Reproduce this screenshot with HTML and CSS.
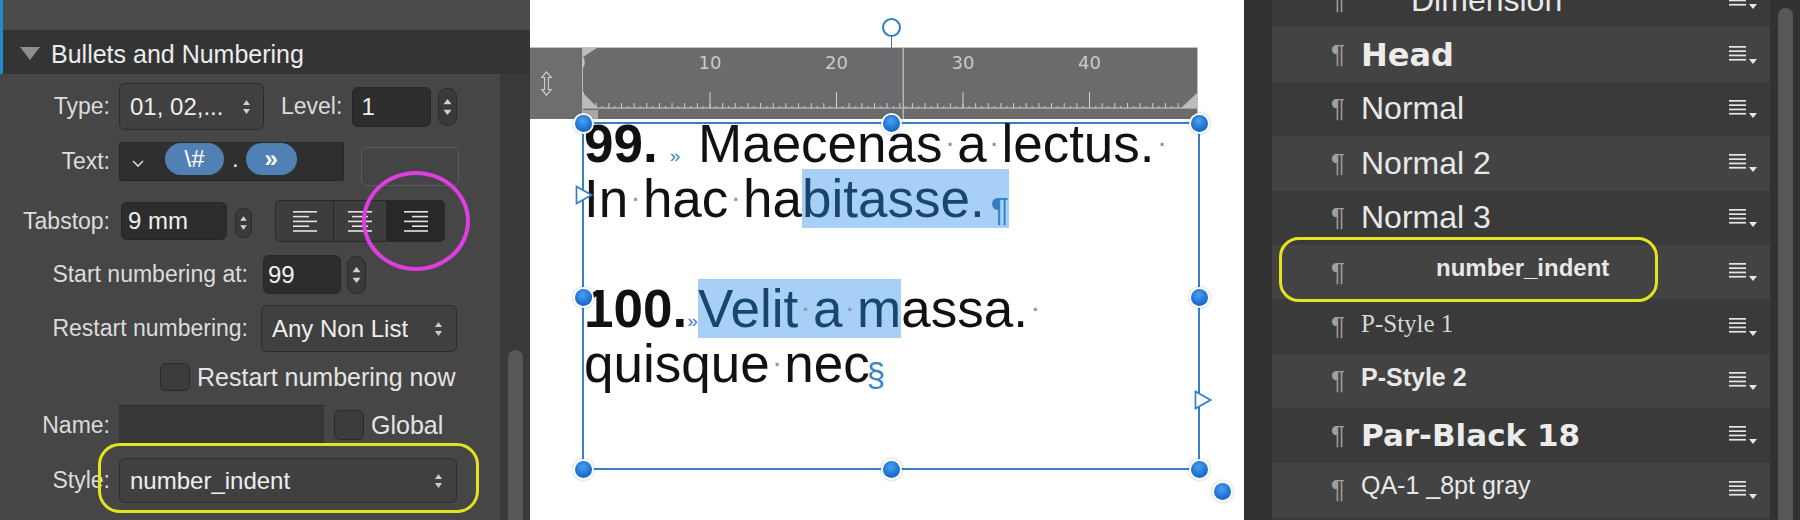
FILE: index.html
```html
<!DOCTYPE html>
<html>
<head>
<meta charset="utf-8">
<link rel="stylesheet" href="styles.css">
</head>
<body>
<div class="app">
  <aside class="left">
    <div class="topstrip"></div>
    <div class="sec-head">
      <svg class="disc" viewBox="0 0 20 14" width="20" height="14"><polygon points="0,0 20,0 10,13" fill="#8e8e8e"/></svg>
      <span>Bullets and Numbering</span>
    </div>
    <div class="lbody">
      <div class="form">
        <div class="row r1">
          <span class="lbl">Type:</span>
          <div class="select s-type"><span class="val">01, 02,...</span><svg class="arr" viewBox="0 0 9 18" width="9" height="18"><polygon points="1,7 8,7 4.5,2"/><polygon points="1,11 8,11 4.5,16"/></svg></div>
          <span class="lbl2">Level:</span>
          <div class="input in-level"><span class="val">1</span></div>
          <div class="stepper st-a"><svg viewBox="0 0 19 38" width="17" height="36"><polygon points="5,16 14,16 9.5,10"/><polygon points="5,22 14,22 9.5,28"/></svg></div>
        </div>
        <div class="row r2">
          <span class="lbl tall">Text:</span>
          <div class="tokens">
            <svg class="chev" viewBox="0 0 12 8" width="12" height="8"><polyline points="1,1 6,6 11,1" fill="none" stroke="#d6d6d6" stroke-width="1.6"/></svg>
            <span class="pill p1">\#</span>
            <span class="tdot">.</span>
            <span class="pill p2">»</span>
          </div>
          <div class="box"></div>
        </div>
        <div class="row r3">
          <span class="lbl">Tabstop:</span>
          <div class="input in-tab"><span class="val">9 mm</span></div>
          <div class="stepper st-b"><svg viewBox="0 0 19 38" width="15" height="28"><polygon points="5,16 14,16 9.5,10"/><polygon points="5,22 14,22 9.5,28"/></svg></div>
          <div class="seg">
            <div class="sg sg1"><svg viewBox="0 0 24 21" width="24" height="21"><rect x="0" y="0" width="24" height="1.6"/><rect x="0" y="4.8" width="16" height="1.6"/><rect x="0" y="9.6" width="24" height="1.6"/><rect x="0" y="14.4" width="16" height="1.6"/><rect x="0" y="19.2" width="24" height="1.6"/></svg></div>
            <div class="sg sg2"><svg viewBox="0 0 24 21" width="24" height="21"><rect x="0" y="0" width="24" height="1.6"/><rect x="4" y="4.8" width="16" height="1.6"/><rect x="0" y="9.6" width="24" height="1.6"/><rect x="4" y="14.4" width="16" height="1.6"/><rect x="0" y="19.2" width="24" height="1.6"/></svg></div>
            <div class="sg sg3 on"><svg viewBox="0 0 24 21" width="24" height="21"><rect x="0" y="0" width="24" height="1.6"/><rect x="8" y="4.8" width="16" height="1.6"/><rect x="0" y="9.6" width="24" height="1.6"/><rect x="8" y="14.4" width="16" height="1.6"/><rect x="0" y="19.2" width="24" height="1.6"/></svg></div>
          </div>
        </div>
        <div class="row r4">
          <span class="lbl wide">Start numbering at:</span>
          <div class="input in-start"><span class="val">99</span></div>
          <div class="stepper st-c"><svg viewBox="0 0 19 38" width="17" height="36"><polygon points="5,16 14,16 9.5,10"/><polygon points="5,22 14,22 9.5,28"/></svg></div>
        </div>
        <div class="row r5">
          <span class="lbl wide">Restart numbering:</span>
          <div class="select s-restart"><span class="val">Any Non List</span><svg class="arr" viewBox="0 0 9 18" width="9" height="18"><polygon points="1,7 8,7 4.5,2"/><polygon points="1,11 8,11 4.5,16"/></svg></div>
        </div>
        <div class="row r6">
          <div class="check"></div>
          <span class="clbl">Restart numbering now</span>
        </div>
        <div class="row r7">
          <span class="lbl">Name:</span>
          <div class="input in-name"></div>
          <div class="check ck2"></div>
          <span class="clbl">Global</span>
        </div>
        <div class="row r8">
          <span class="lbl">Style:</span>
          <div class="select s-style"><span class="val">number_indent</span><svg class="arr" viewBox="0 0 9 18" width="9" height="18"><polygon points="1,7 8,7 4.5,2"/><polygon points="1,11 8,11 4.5,16"/></svg></div>
        </div>
      </div>
      <div class="track"><div class="thumb"></div></div>
    </div>
    <div class="ann magenta"></div>
    <div class="ann yel-left"></div>
  </aside>

  <main class="canvas">
    <div class="ruler">
      <div class="rl-left"><svg viewBox="0 0 11 25" width="11" height="25"><polygon points="5.5,0.8 10.2,6.5 7.4,6.5 7.4,18.5 10.2,18.5 5.5,24.2 0.8,18.5 3.6,18.5 3.6,6.5 0.8,6.5" fill="none" stroke="#d2d2d2" stroke-width="1.1"/></svg></div>
      <svg class="rl-main" width="614" height="71" viewBox="0 0 614 71">
        <defs>
          <pattern id="mm" x="0" y="0" width="12.65" height="71" patternUnits="userSpaceOnUse">
            <rect x="0" y="55" width="1" height="5" fill="#cfcfcf"/>
            <rect x="6.1" y="58" width="1" height="2" fill="#cfcfcf"/>
          </pattern>
        </defs>
        <rect x="0" y="0" width="614" height="71" fill="url(#mm)"/>
        <rect x="0" y="59.5" width="614" height="1" fill="#cfcfcf"/>
        <rect x="0" y="44" width="1" height="16" fill="#d0d0d0"/>
        <rect x="126.5" y="44" width="1" height="16" fill="#d0d0d0"/>
        <rect x="253" y="44" width="1" height="16" fill="#d0d0d0"/>
        <rect x="379.5" y="44" width="1" height="16" fill="#d0d0d0"/>
        <rect x="506" y="44" width="1" height="16" fill="#d0d0d0"/>
        <g font-family="DejaVu Sans, sans-serif" font-size="18" fill="#c9c9c9" text-anchor="middle">
          <text x="-3" y="21">0</text>
          <text x="127" y="21">10</text>
          <text x="253.5" y="21">20</text>
          <text x="380" y="21">30</text>
          <text x="506.5" y="21">40</text>
        </g>
        <rect x="319.5" y="0" width="1.5" height="71" fill="#b4b4b4"/>
        <polygon points="0,0 14,0 0,9" fill="#bcbcbc"/>
        <polygon points="0,45 0,60 15,60" fill="#bcbcbc"/>
        <rect x="0" y="62" width="15" height="9" fill="#a9a9a9"/>
        <polygon points="614,45 614,60 598,60" fill="#bcbcbc"/>
      </svg>
    </div>
    <div class="rot-line"></div>
    <div class="rot"></div>
    <div class="frame">
      <div class="story">
        <p><span class="num">99.<span class="tm t1">»</span></span>Maecenas<span class="d">·</span>a<span class="d">·</span>lectus.<span class="d">·</span><br>In<span class="d">·</span>hac<span class="d">·</span>ha<span class="hl">bitasse.<span class="pm">¶</span></span></p>
        <p><span class="num">100.<span class="tm">»</span></span><span class="hl">Velit<span class="d">·</span>a<span class="d">·</span>m</span>assa.<span class="d">·</span><br>quisque<span class="d">·</span>nec<span class="sec">§</span></p>
      </div>
      <svg class="flow fl-l" viewBox="0 0 18 20" width="18" height="20"><polygon points="1.5,1.5 16.5,10 1.5,18.5" fill="#fff" stroke="#3580c3" stroke-width="1.7"/></svg>
      <svg class="flow fl-r" viewBox="0 0 18 20" width="18" height="20"><polygon points="1.5,1.5 16.5,10 1.5,18.5" fill="#fff" stroke="#3580c3" stroke-width="1.7"/></svg>
      <div class="h h-tl"></div>
      <div class="h h-tc"></div>
      <div class="h h-tr"></div>
      <div class="h h-ml"></div>
      <div class="h h-mr"></div>
      <div class="h h-bl"></div>
      <div class="h h-bc"></div>
      <div class="h h-br"></div>
      <div class="h h-x"></div>
    </div>
  </main>

  <aside class="right">
    <div class="gutter"></div>
    <div class="rlist">
      <div class="rrow dk"><span class="pil">¶</span><span class="nm reg ind-dim">Dimension</span><svg class="lic" viewBox="0 0 28 18" width="28" height="18"><rect x="0" y="0" width="17" height="1.7"/><rect x="0" y="4.3" width="17" height="1.7"/><rect x="0" y="8.6" width="17" height="1.7"/><rect x="0" y="12.9" width="17" height="1.7"/><polygon points="20,13 28,13 24,18"/></svg></div>
      <div class="rrow lt"><span class="pil">¶</span><span class="nm black">Head</span><svg class="lic" viewBox="0 0 28 18" width="28" height="18"><rect x="0" y="0" width="17" height="1.7"/><rect x="0" y="4.3" width="17" height="1.7"/><rect x="0" y="8.6" width="17" height="1.7"/><rect x="0" y="12.9" width="17" height="1.7"/><polygon points="20,13 28,13 24,18"/></svg></div>
      <div class="rrow dk"><span class="pil">¶</span><span class="nm reg">Normal</span><svg class="lic" viewBox="0 0 28 18" width="28" height="18"><rect x="0" y="0" width="17" height="1.7"/><rect x="0" y="4.3" width="17" height="1.7"/><rect x="0" y="8.6" width="17" height="1.7"/><rect x="0" y="12.9" width="17" height="1.7"/><polygon points="20,13 28,13 24,18"/></svg></div>
      <div class="rrow lt"><span class="pil">¶</span><span class="nm reg">Normal 2</span><svg class="lic" viewBox="0 0 28 18" width="28" height="18"><rect x="0" y="0" width="17" height="1.7"/><rect x="0" y="4.3" width="17" height="1.7"/><rect x="0" y="8.6" width="17" height="1.7"/><rect x="0" y="12.9" width="17" height="1.7"/><polygon points="20,13 28,13 24,18"/></svg></div>
      <div class="rrow dk"><span class="pil">¶</span><span class="nm reg">Normal 3</span><svg class="lic" viewBox="0 0 28 18" width="28" height="18"><rect x="0" y="0" width="17" height="1.7"/><rect x="0" y="4.3" width="17" height="1.7"/><rect x="0" y="8.6" width="17" height="1.7"/><rect x="0" y="12.9" width="17" height="1.7"/><polygon points="20,13 28,13 24,18"/></svg></div>
      <div class="rrow lt"><span class="pil">¶</span><span class="nm numind">number_indent</span><svg class="lic" viewBox="0 0 28 18" width="28" height="18"><rect x="0" y="0" width="17" height="1.7"/><rect x="0" y="4.3" width="17" height="1.7"/><rect x="0" y="8.6" width="17" height="1.7"/><rect x="0" y="12.9" width="17" height="1.7"/><polygon points="20,13 28,13 24,18"/></svg></div>
      <div class="rrow dk"><span class="pil">¶</span><span class="nm serif">P-Style 1</span><svg class="lic" viewBox="0 0 28 18" width="28" height="18"><rect x="0" y="0" width="17" height="1.7"/><rect x="0" y="4.3" width="17" height="1.7"/><rect x="0" y="8.6" width="17" height="1.7"/><rect x="0" y="12.9" width="17" height="1.7"/><polygon points="20,13 28,13 24,18"/></svg></div>
      <div class="rrow lt"><span class="pil">¶</span><span class="nm boldsm">P-Style 2</span><svg class="lic" viewBox="0 0 28 18" width="28" height="18"><rect x="0" y="0" width="17" height="1.7"/><rect x="0" y="4.3" width="17" height="1.7"/><rect x="0" y="8.6" width="17" height="1.7"/><rect x="0" y="12.9" width="17" height="1.7"/><polygon points="20,13 28,13 24,18"/></svg></div>
      <div class="rrow dk"><span class="pil">¶</span><span class="nm black pb">Par-Black 18</span><svg class="lic" viewBox="0 0 28 18" width="28" height="18"><rect x="0" y="0" width="17" height="1.7"/><rect x="0" y="4.3" width="17" height="1.7"/><rect x="0" y="8.6" width="17" height="1.7"/><rect x="0" y="12.9" width="17" height="1.7"/><polygon points="20,13 28,13 24,18"/></svg></div>
      <div class="rrow lt"><span class="pil">¶</span><span class="nm qa">QA-1 _8pt gray</span><svg class="lic" viewBox="0 0 28 18" width="28" height="18"><rect x="0" y="0" width="17" height="1.7"/><rect x="0" y="4.3" width="17" height="1.7"/><rect x="0" y="8.6" width="17" height="1.7"/><rect x="0" y="12.9" width="17" height="1.7"/><polygon points="20,13 28,13 24,18"/></svg></div>
      <div class="rrow dk"></div>
    </div>
    <div class="rtrack"><div class="rthumb"></div></div>
    <div class="ann yel-right"></div>
  </aside>
</div>
</body>
</html>
```

FILE: styles.css
```css
* { box-sizing: border-box; }
html, body { margin: 0; padding: 0; background: #ffffff; }
body { font-family: "Liberation Sans", Arial, sans-serif; }

.app { display: flex; width: 1800px; height: 520px; overflow: hidden; }

/* ---------- left inspector panel ---------- */
.left { position: relative; width: 530px; flex: none; display: flex; flex-direction: column; background: #464646; }
.topstrip { height: 30px; flex: none; background: #4b4b4b; box-shadow: inset 3px 0 0 #1f8ad2; }
.sec-head { height: 44px; flex: none; background: #343434; display: flex; align-items: center; padding: 4px 0 0 20px; color: #ececec; font-size: 25px; box-shadow: inset 3px 0 0 #1f8ad2; }
.sec-head .disc { margin-right: 11px; flex: none; }

.lbody { flex: 1; display: flex; min-height: 0; }
.form { width: 500px; flex: none; padding-top: 9px; }
.track { flex: 1; background: #393939; padding: 276px 0 0 8px; }
.thumb { width: 15px; height: 200px; border-radius: 8px; background: #575757; }

.row { display: flex; align-items: center; }
.lbl { width: 110px; flex: none; text-align: right; color: #dcdcdc; font-size: 23px; }
.lbl.wide { width: 248px; }
.lbl.tall { line-height: 39px; }
.lbl2 { color: #dcdcdc; font-size: 23px; margin-left: 17px; }
.val { color: #eeeeee; font-size: 24px; white-space: nowrap; }
.clbl { color: #e4e4e4; font-size: 25px; margin-left: 7px; white-space: nowrap; }

.select { display: flex; align-items: center; justify-content: space-between; background: #404040; border: 1px solid #2b2b2b; border-radius: 6px; padding: 0 12px 0 10px; }
.select .arr { fill: #cfcfcf; flex: none; }
.input { display: flex; align-items: center; background: #2d2d2d; border: 1px solid #262626; border-radius: 6px; }
.stepper { display: flex; align-items: center; justify-content: center; background: #3a3a3a; border: 1px solid #2a2a2a; border-radius: 9px; flex: none; }
.stepper svg { fill: #d2d2d2; }
.check { width: 30px; height: 28px; background: #3b3b3b; border: 1px solid #2a2a2a; border-radius: 6px; flex: none; }

.r1 { height: 47px; }
.s-type { margin-left: 9px; width: 145px; height: 47px; }
.in-level { margin-left: 10px; width: 79px; height: 40px; padding-left: 8px; }
.st-a { margin-left: 7px; width: 19px; height: 38px; }

.r2 { margin-top: 12px; height: 44px; align-items: flex-start; }
.tokens { margin-left: 9px; width: 225px; height: 39px; background: #2f2f2f; border: 1px solid #272727; border-radius: 2px; display: flex; align-items: flex-start; padding: 0 0 0 12px; }
.chev { margin-top: 17px; flex: none; }
.pill { height: 32px; line-height: 32px; border-radius: 16px; background: #5181b4; color: #ffffff; text-align: center; font-size: 24px; flex: none; }
.p1 { width: 59px; margin-left: 21px; }
.p2 { width: 51px; margin-left: 7px; font-weight: 700; }
.tdot { height: 32px; line-height: 32px; color: #e8e8e8; font-size: 24px; margin-left: 8px; }
.box { margin-left: 17px; margin-top: 5px; width: 98px; height: 39px; border: 1px solid #5c5c5c; border-radius: 6px; background: #444444; }

.r3 { margin-top: 14px; height: 42px; }
.in-tab { margin-left: 11px; width: 106px; height: 38px; padding-left: 6px; }
.st-b { margin-left: 8px; margin-top: 4px; width: 17px; height: 30px; border-radius: 8px; }
.seg { margin-left: 23px; width: 170px; height: 42px; display: flex; background: #3d3d3d; border: 1px solid #2a2a2a; border-radius: 5px; overflow: hidden; }
.sg { display: flex; align-items: center; justify-content: center; fill: #e4e4e4; }
.sg1 { width: 58px; border-right: 1px solid #2a2a2a; }
.sg2 { width: 53px; border-right: 1px solid #2a2a2a; }
.sg3 { flex: 1; }
.sg.on { background: #282828; }

.r4 { margin-top: 13px; height: 39px; }
.in-start { margin-left: 15px; width: 78px; height: 39px; padding-left: 4px; }
.st-c { margin-left: 6px; width: 19px; height: 38px; }

.r5 { margin-top: 11px; height: 47px; }
.s-restart { margin-left: 13px; width: 196px; height: 47px; padding-right: 13px; }

.r6 { margin-top: 11px; height: 28px; padding-left: 160px; }

.r7 { margin-top: 14px; height: 40px; }
.in-name { margin-left: 9px; width: 205px; height: 40px; background: #373737; border: none; border-top: 1px solid #2c2c2c; border-radius: 0; }
.ck2 { margin-left: 10px; height: 30px; }

.r8 { margin-top: 13px; height: 45px; }
.s-style { margin-left: 9px; width: 338px; height: 45px; padding-right: 13px; }

/* annotations drawn over the screenshot */
.ann { position: absolute; pointer-events: none; }
.magenta { left: 362px; top: 171px; width: 108px; height: 100px; border: 4px solid #df3ee0; border-radius: 50%; }
.yel-left { left: 98px; top: 443px; width: 381px; height: 70px; border: 3px solid #e3e31f; border-radius: 22px; }
.yel-right { left: 35px; top: 237px; width: 379px; height: 65px; border: 3px solid #e3e31f; border-radius: 20px; }

/* ---------- canvas ---------- */
.canvas { position: relative; width: 714px; flex: none; background: #ffffff; }
.ruler { position: absolute; left: 0; top: 47px; width: 668px; height: 71px; box-sizing: content-box; border-top: 1px solid #c2c2c2; display: flex; background: #6b6b6b; }
.rl-left { width: 53px; flex: none; background: #6e6e6e; border-right: 1px solid #b8b8b8; display: flex; align-items: center; padding-left: 11px; }
.rl-main { display: block; flex: none; border-right: 1px solid #bdbdbd; box-sizing: content-box; }
.rot-line { position: absolute; left: 360.5px; top: 36px; width: 1.6px; height: 87px; background: #4d6f96; }
.rot { position: absolute; left: 351.5px; top: 17.5px; width: 19px; height: 19px; border: 2px solid #2f7fc4; border-radius: 50%; background: #ffffff; }

.frame { position: absolute; left: 52px; top: 122px; width: 618px; height: 348px; border: 2px solid #3580c3; }
.story { margin-top: -8px; font-size: 53px; line-height: 55px; color: #111111; white-space: nowrap; }
.story p { margin: 0; }
.story p + p { margin-top: 55px; }
.num { display: inline-block; width: 114px; font-weight: 700; }
.tm { font-weight: 400; font-size: 19px; line-height: 1; color: #3b7fc0; }
.t1 { margin-left: 12px; }
.d { display: inline-block; width: 14.7px; text-align: center; font-size: 30px; line-height: 1; vertical-align: 10px; color: #7f9bb7; }
.hl { background: #a8d0f6; color: #17466f; }
.pm { font-size: 34px; line-height: 1; vertical-align: -4px; color: #2f80c4; margin-left: 6px; }
.sec { font-size: 33px; line-height: 1; vertical-align: -4px; color: #3a85c2; margin-left: -3px; }

.flow { position: absolute; }
.fl-l { left: -9px; top: 61px; }
.fl-r { left: 610px; top: 266px; }

.h { position: absolute; width: 17px; height: 17px; margin: -8.5px 0 0 -8.5px; border-radius: 50%; background: radial-gradient(circle at 45% 35%, #4c9ff0 0, #1c70d0 60%, #1560bb 100%); box-shadow: 0 0 0 2px #ffffff, 0 0 2px 3px rgba(0, 0, 0, 0.12); }
.h-tl { left: -1px; top: -1px; }
.h-tc { left: 307px; top: -1px; }
.h-tr { left: 615px; top: -1px; }
.h-ml { left: -1px; top: 173px; }
.h-mr { left: 615px; top: 173px; }
.h-bl { left: -1px; top: 345px; }
.h-bc { left: 307px; top: 345px; }
.h-br { left: 615px; top: 345px; }
.h-x { left: 638px; top: 367px; }

/* ---------- right styles panel ---------- */
.right { position: relative; flex: 1; display: flex; background: #323232; overflow: hidden; }
.gutter { width: 28px; flex: none; }
.rlist { width: 498px; flex: none; margin-top: -27px; }
.rrow { height: 54.4px; display: flex; align-items: center; padding: 0 13px 0 59px; }
.rrow.lt { background: #434343; }
.rrow.dk { background: #3a3a3a; }
.pil { width: 30px; flex: none; font-size: 26px; color: #a0a0a0; }
.nm { color: #e8e8e8; white-space: nowrap; }
.reg { font-size: 32px; }
.ind-dim { padding-left: 50px; }
.black { font-family: "DejaVu Sans", sans-serif; font-weight: 700; font-size: 32px; color: #ececec; }
.pb { font-size: 31px; }
.numind { font-weight: 700; font-size: 24px; padding-left: 75px; padding-bottom: 8px; }
.serif { font-family: "Liberation Serif", "Times New Roman", serif; font-size: 25px; color: #d8d8d8; padding-bottom: 6px; }
.boldsm { font-weight: 700; font-size: 25px; padding-bottom: 7px; }
.qa { font-size: 25px; padding-bottom: 8px; }
.lic { margin-left: auto; flex: none; fill: #e6e6e6; }
.rtrack { flex: 1; padding: 8px 0 0 8px; }
.rthumb { width: 15px; height: 540px; border-radius: 8px; background: #575757; }
```
